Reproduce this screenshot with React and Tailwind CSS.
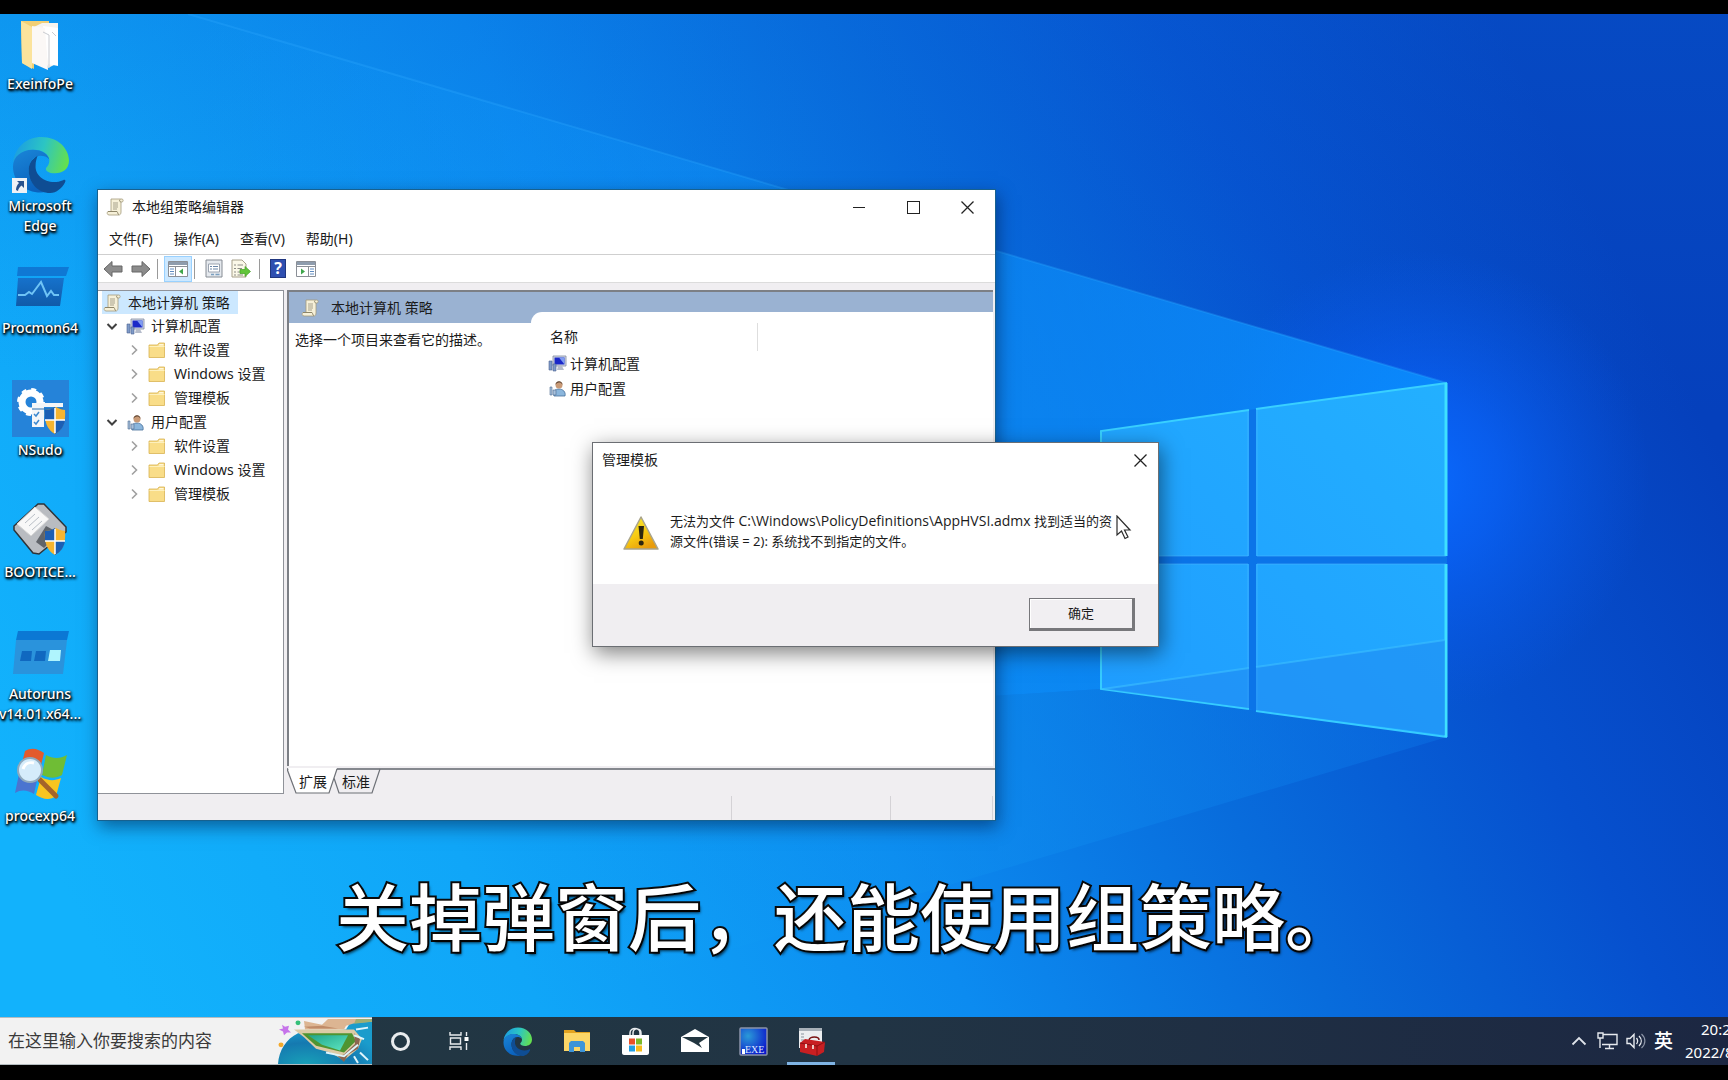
import React, { useState } from "react";

const Wallpaper = () => (
    <svg className="absolute inset-0 w-full h-full" viewBox="0 14 1728 1003" preserveAspectRatio="none" aria-hidden="true">
        <defs>
            <linearGradient id="sky" x1="0" y1="0.75" x2="1" y2="0.45">
                <stop offset="0" stopColor="#12b2fc" />
                <stop offset="0.22" stopColor="#10a6f8" />
                <stop offset="0.45" stopColor="#0c8bf0" />
                <stop offset="0.64" stopColor="#086cdc" />
                <stop offset="0.82" stopColor="#0650ce" />
                <stop offset="1" stopColor="#0540bc" />
            </linearGradient>
            <radialGradient id="glow" gradientUnits="userSpaceOnUse" cx="1420" cy="480" r="230">
                <stop offset="0" stopColor="#0a6bff" stopOpacity="0.95" />
                <stop offset="0.35" stopColor="#0a66ff" stopOpacity="0.65" />
                <stop offset="1" stopColor="#0a5cf0" stopOpacity="0" />
            </radialGradient>
            <linearGradient id="beam" gradientUnits="userSpaceOnUse" x1="200" y1="0" x2="1447" y2="0">
                <stop offset="0" stopColor="#12a4ff" stopOpacity="0" />
                <stop offset="0.5" stopColor="#0f98ff" stopOpacity="0.4" />
                <stop offset="1" stopColor="#0a90ff" stopOpacity="0.85" />
            </linearGradient>
            <linearGradient id="lowBeam" gradientUnits="userSpaceOnUse" x1="500" y1="0" x2="1447" y2="0">
                <stop offset="0" stopColor="#10a8f8" stopOpacity="0" />
                <stop offset="0.55" stopColor="#0e8cee" stopOpacity="0.5" />
                <stop offset="1" stopColor="#0b70e4" stopOpacity="0.5" />
            </linearGradient>
            <linearGradient id="pane" x1="0" y1="1" x2="1" y2="0">
                <stop offset="0" stopColor="#1f9cff" />
                <stop offset="1" stopColor="#23b0ff" />
            </linearGradient>
            <linearGradient id="topShade" x1="0" y1="0" x2="0" y2="1">
                <stop offset="0" stopColor="#0866d8" stopOpacity="0.25" />
                <stop offset="0.4" stopColor="#0866d8" stopOpacity="0" />
            </linearGradient>
        </defs>
        <rect y="14" width="1728" height="1003" fill="url(#sky)" />
        <rect y="14" width="1728" height="1003" fill="url(#topShade)" />
        <rect x="1180" y="240" width="480" height="480" fill="url(#glow)" />
        <path d="M0 14H188L1447 383V737L1101 689 900 702 0 745Z" fill="url(#beam)" />
        <path d="M0 745 900 702 1101 689 1447 737 1000 870 500 1017H0Z" fill="url(#lowBeam)" />
        <path d="M188 14 1447 383" stroke="#2fa8ff" strokeWidth="2" strokeOpacity="0.3" />
        <path d="M1249 410 1256 409V711L1249 709ZM1101 556H1447V564H1101Z" fill="#0b74e8" />
        <path d="M1101 431 1249 410V556H1101ZM1256 409 1447 383V556H1256ZM1101 564H1249V709L1101 689ZM1256 564H1447V737L1256 711Z" fill="url(#pane)" />
        <path d="M1101 556V431L1249 410M1256 409 1447 383" fill="none" stroke="#39d0ff" strokeWidth="2" />
        <path d="M1101 564V689L1249 709M1256 711 1447 737" fill="none" stroke="#36ccff" strokeWidth="2" />
        <path d="M1446 383V556M1446 564V737" stroke="#3fe0ff" strokeWidth="3" />
        <path d="M1248 411V556H1101M1257 410V556H1446M1101 564H1248V708M1446 564H1257V710" fill="none" stroke="#4bb8ff" strokeOpacity="0.6" strokeWidth="1" />
        <path d="M1103 689 1249 668V708ZM1256 667 1445 640V735L1256 710Z" fill="#2087f2" fillOpacity="0.5" />
        <path d="M1103 689 1249 668M1256 667 1445 640" stroke="#3cc0ff" strokeWidth="2" strokeOpacity="0.6" />
    </svg>
);

const Shield = () => (
    <g>
        <path d="M44 30c4 0 8-1 11-3 3 2 7 3 9 3 1 11-2 20-10 24-8-4-11-13-10-24Z" fill="#f7b531" />
        <path d="M54 27c-3 2-6 3-10 3v10h10ZM64 40H54v14c6-3 9-8 10-14Z" fill="#1c5fb4" />
        <path d="M44 40h20M54 28v25" stroke="#fff" strokeWidth="1.5" />
    </g>
);

const EdgeLogo = ({ className }) => (
    <svg className={className} viewBox="0 0 58 58" aria-hidden="true">
        <defs>
            <linearGradient id="edgeTop" x1="0" y1="0.4" x2="1" y2="0.6">
                <stop offset="0" stopColor="#1b9de2" />
                <stop offset="0.5" stopColor="#2cc5c3" />
                <stop offset="1" stopColor="#66e04c" />
            </linearGradient>
            <linearGradient id="edgeLeft" x1="0" y1="0" x2="0.4" y2="1">
                <stop offset="0" stopColor="#1a86d8" />
                <stop offset="1" stopColor="#0b62bd" />
            </linearGradient>
        </defs>
        <path d="M1 27C3 11 15 1 30 1c17 0 28 12 28 24 0 9-7 13-14 13-7 0-11-3-9-6 2-2 3-4 3-7 0-6-7-11-16-11C12 14 4 20 1 27Z" fill="url(#edgeTop)" />
        <path d="M1 31c0-10 9-17 20-17 10 0 16 5 17 10-2-3-6-4-9-4-7 0-12 6-12 15 0 10 7 19 18 22C16 60 1 48 1 31Z" fill="url(#edgeLeft)" />
        <path d="M26 20c-7 4-9 9-9 15 0 12 9 23 22 23 6 0 12-5 15-11 1-2 0-3-2-2-14 6-29-3-28-15 0-4 1-7 2-10Z" fill="#0f4d93" />
    </svg>
);

const FolderOpenIcon = () => (
    <svg className="w-[57px] h-[57px]" viewBox="0 0 57 57" aria-hidden="true">
        <path d="M9 7h28v8H22v40L10 49Z" fill="#f2cf74" />
        <path d="M9 7 20 13v42L10 49Z" fill="#fbe39c" />
        <path d="M22 13 30 9h16v40l-10 5Z" fill="#f7f4ef" />
        <path d="M31 12l15 2v38l-10-2Z" fill="#fff" />
        <path d="M20 12 33 14l3 42-16-7Z" fill="#fbf8f6" />
        <path d="M31 18l6 3v33M40 18l4 4" fill="none" stroke="#c9cbd0" />
    </svg>
);

const EdgeDesktopIcon = () => (
    <div className="relative">
        <EdgeLogo className="w-[57px] h-[57px]" />
        <svg className="absolute left-0 bottom-0 w-[15px] h-[15px]" viewBox="0 0 15 15" aria-hidden="true">
            <path d="M0 0h15v15H0Z" fill="#eef1f5" />
            <path d="M5 3h7v7L9.500 7.500C7.500 9 6.500 10.500 6 13L4 12c0-3 1-5 3-7Z" fill="#28508c" />
        </svg>
    </div>
);

const ProcmonIcon = () => (
    <svg className="w-[57px] h-[57px]" viewBox="0 0 57 57" aria-hidden="true">
        <defs>
            <linearGradient id="procmon" x1="0" y1="0" x2="0" y2="1">
                <stop offset="0" stopColor="#1672cc" />
                <stop offset="1" stopColor="#105aa8" />
            </linearGradient>
        </defs>
        <path d="M6 9h51l-3 9H5Z" fill="#0f78d4" />
        <path d="M6 20h46l-4 28H4Z" fill="url(#procmon)" />
        <path d="M6 37h7l4-3 3 2 9-12 6 14 4-5 3 4h5" fill="none" stroke="#6fc4f5" strokeWidth="2" />
    </svg>
);

const NSudoIcon = () => (
    <svg className="w-[57px] h-[57px]" viewBox="0 0 57 57" aria-hidden="true">
        <path d="M0 0h57v57H0Z" fill="#2583d9" />
        <circle cx="19" cy="22" r="9" fill="none" stroke="#fff" strokeWidth="7" />
        <circle cx="19" cy="22" r="12" fill="none" stroke="#fff" strokeWidth="4" strokeDasharray="4.700 4.700" />
        <path d="M20 23h31v4H20ZM20 27h12v20H20Z" fill="#f4f6f8" />
        <path d="M20 29h31" stroke="#2b6fae" />
        <path d="m22 34 2 2 3-4M22 42l2 2 3-4" fill="none" stroke="#3c88cf" strokeWidth="1.500" />
        <g transform="translate(-11 0)"><Shield /></g>
    </svg>
);

const BooticeIcon = () => (
    <svg className="w-[57px] h-[57px]" viewBox="0 0 57 57" aria-hidden="true">
        <path d="M26 2h6l22 23v5L27 52l-6-1L2 28v-4Z" fill="#b9bcc1" stroke="#2e3338" strokeWidth="1.500" />
        <path d="M23 5 37 17 19 34 5 22Z" fill="#f8f8f8" stroke="#d5d5d5" />
        <path d="M13 21l10-9M17 24l10-9M20 28l10-9" stroke="#b9bfc6" />
        <path d="M34 24 47 31 32 46 24 40Z" fill="#60646a" />
        <g transform="translate(-11 -1)"><Shield /></g>
    </svg>
);

const AutorunsIcon = () => (
    <svg className="w-[57px] h-[57px]" viewBox="0 0 57 57" aria-hidden="true">
        <path d="M6 7h51l-2 9H4Z" fill="#0b78d4" />
        <path d="M4 16h51l-4 34H1Z" fill="#2a93dc" />
        <path d="M10 27h10l-1 10H8ZM24 27h10l-1 10H22Z" fill="#1068c0" />
        <path d="M38 26h11l-1 11H36Z" fill="#aff4fd" />
    </svg>
);

const ProcexpIcon = () => (
    <svg className="w-[57px] h-[57px]" viewBox="0 0 57 57" aria-hidden="true">
        <path d="M13 5c7-4 13-2 19 2l-5 20c-6-4-12-5-19-2Z" fill="#e35a2c" />
        <path d="M34 9c7 4 14 4 21 0l-5 20c-7 4-13 3-20 0Z" fill="#6fbd35" />
        <path d="M7 28c7-3 13-2 19 2l-4 18c-6-4-13-5-19-1Z" fill="#4b74d0" />
        <path d="M29 31c7 4 14 4 20 1l-5 18c-6 5-14 3-20-1Z" fill="#f8c51f" />
        <path d="M28 34 44 50" stroke="#a4642a" strokeWidth="5" strokeLinecap="round" />
        <circle cx="18" cy="24" r="12" fill="#d5ecfb" stroke="#8fa9bd" strokeWidth="2" />
        <path d="M11 23c2-6 7-7 11-6" fill="none" stroke="#fff" strokeWidth="3" />
    </svg>
);

const desktopIcons = [
    { id: 1, label: "ExeinfoPe", Icon: FolderOpenIcon },
    { id: 2, label: "Microsoft Edge", Icon: EdgeDesktopIcon },
    { id: 3, label: "Procmon64", Icon: ProcmonIcon },
    { id: 4, label: "NSudo", Icon: NSudoIcon },
    { id: 5, label: "BOOTICE...", Icon: BooticeIcon },
    { id: 6, label: "Autoruns v14.01.x64...", Icon: AutorunsIcon },
    { id: 7, label: "procexp64", Icon: ProcexpIcon },
];

const ScrollIcon = () => (
    <svg className="w-[18px] h-[18px] shrink-0" viewBox="0 0 18 18" aria-hidden="true">
        <path d="M5 1h11c1.500 0 1.500 3 0 3h-1v10c0 2-1 3-2 3H3c-2 0-2.500-3-1-3.500h3Z" fill="#f6f0d8" stroke="#a39a7c" strokeWidth="0.800" />
        <path d="M14 1.500c-1 1 0 2.500 1 2.500M2 13.500h9c1 1 .5 3 2 3" fill="none" stroke="#8d8568" />
        <path d="M7 5h5M7 7h5M7 9h5M7 11h4" stroke="#a6a18c" />
    </svg>
);

const ComputerIcon = () => (
    <svg className="w-[19px] h-[17px] shrink-0" viewBox="0 0 19 17" aria-hidden="true">
        <path d="M5 1h13v10H5Z" fill="#d8dce6" stroke="#7e88a0" strokeWidth="0.800" />
        <path d="M6.500 2.500h10v7h-10Z" fill="#1a28c8" />
        <path d="M11 2.500h5.500v7Z" fill="#7f9cf0" />
        <path d="M10 11h4l2 4H9Z" fill="#b5bccb" />
        <path d="M1 6h3v9H1ZM5 9h3v7H5Z" fill="#7f9bc8" stroke="#4a6291" strokeWidth="0.600" />
    </svg>
);

const UserIcon = () => (
    <svg className="w-[17px] h-[17px] shrink-0" viewBox="0 0 17 17" aria-hidden="true">
        <path d="M5 16c-1-5 1-7 5-7s7 3 6 7Z" fill="#8bb6dc" stroke="#46709b" strokeWidth="0.800" />
        <circle cx="10" cy="5" r="3.500" fill="#c99a76" />
        <path d="M6.500 5c0-5 7-5 7 0-1-2-2-2.500-3.500-2.500S7 3.500 6.500 5Z" fill="#5f4634" />
        <path d="M1 7h2v8H1ZM4 10h3v5H4Z" fill="#a8c1dc" stroke="#4d6c90" strokeWidth="0.600" />
    </svg>
);

const FolderIcon = () => (
    <svg className="w-[18px] h-[17px] shrink-0" viewBox="0 0 18 17" aria-hidden="true">
        <path d="M1 3h8.500l1.500-2h5.500v14.500H1Z" fill="#f9dd88" stroke="#d8b352" strokeWidth="0.800" />
        <path d="M11.500 2h4v1.500h-5Z" fill="#fff7dc" />
        <path d="M1.500 4.500h15" stroke="#fdf0bd" />
    </svg>
);

const Chevron = ({ open }) => (
    <svg className="w-3 h-3 shrink-0" viewBox="0 0 12 12" aria-hidden="true">
        {open ? (
            <path d="M1.500 4 6 8.500 10.500 4" fill="none" stroke="#404040" strokeWidth="2" />
        ) : (
            <path d="M4 1.500 8.500 6 4 10.500" fill="none" stroke="#a0a0a0" strokeWidth="1.600" />
        )}
    </svg>
);

const CloseGlyph = () => (
    <svg className="w-[13px] h-[13px]" viewBox="0 0 13 13" aria-hidden="true">
        <path d="M.5.5 12.500 12.500M12.500.5.5 12.500" stroke="#222" strokeWidth="1.300" />
    </svg>
);

const tree = [
    { name: "计算机配置", Icon: ComputerIcon, children: ["软件设置", "Windows 设置", "管理模板"] },
    { name: "用户配置", Icon: UserIcon, children: ["软件设置", "Windows 设置", "管理模板"] },
];

const menus = ["文件(F)", "操作(A)", "查看(V)", "帮助(H)"];

const Separator = () => <span className="w-px h-5 bg-[#9a9a9a]" />;

const ArrowIcon = ({ flip }) => (
    <svg className={flip ? "w-5 h-[18px] rotate-180" : "w-5 h-[18px]"} viewBox="0 0 20 18" aria-hidden="true">
        <path d="M1 9 9 1.500V6h10v6H9v4.500Z" fill="#8c8c8c" stroke="#666" />
    </svg>
);

const PanelIcon = ({ flip }) => (
    <svg className="w-5 h-4" viewBox="0 0 20 16" aria-hidden="true">
        <path d="M.5.5h19v15H.5Z" fill="#fff" stroke="#8b8f96" />
        <path d="M1 1h18v3H1Z" fill="#8e9cad" />
        <path d="M1 5.500h18" stroke="#8b8f96" />
        {flip ? (
            <>
                <path d="M12.500 6v9" stroke="#8b8f96" />
                <path d="M14 8h4M14 10.500h4M14 13h4" stroke="#5f8bc0" />
                <path d="M5 7.500v6l4-3Z" fill="#3fa64b" />
            </>
        ) : (
            <>
                <path d="M7.500 6v9" stroke="#8b8f96" />
                <path d="M2 8h4M2 10.500h4M2 13h4" stroke="#5f8bc0" />
                <path d="M15 7.500v6l-4-3Z" fill="#3fa64b" />
            </>
        )}
    </svg>
);

const PropsIcon = () => (
    <svg className="w-[18px] h-[19px]" viewBox="0 0 18 19" aria-hidden="true">
        <path d="M1 3V1h16v17H1Z" fill="#e5e9ee" stroke="#868c94" />
        <path d="M3.500 5h11v8h-11Z" fill="#fff" stroke="#9aa3b0" />
        <path d="M5 7.500h2M8 7.500h5M5 10h2M8 10h5" stroke="#6a86a8" />
        <path d="M6 15.500h3M10.500 15.500h4" stroke="#7ba0c0" strokeWidth="1.500" />
    </svg>
);

const ExportIcon = () => (
    <svg className="w-5 h-[19px]" viewBox="0 0 20 19" aria-hidden="true">
        <path d="M1 1h10l4 4v13H1Z" fill="#fbf8e8" stroke="#a7a08a" />
        <path d="M3 6h2M6.500 6H12M3 9.500h2M6.500 9.500H11M3 13h2M6.500 13H10M3 16h2M6.500 16H12" stroke="#8d8c86" />
        <path d="M9 10.500h5V7.500l5.500 5-5.500 5v-3H9Z" fill="#62c53a" stroke="#419d22" strokeWidth="0.700" />
    </svg>
);

const HelpIcon = () => (
    <span className="w-4 h-[19px] bg-[#2f4fb0] border border-[#20367f] text-white text-base leading-4 font-bold text-center">?</span>
);

const PolicyWindow = () => {
    const [selected, setSelected] = useState("root");

    return (
        <section className="absolute left-[97px] top-[175px] w-[899px] flex flex-col bg-white border border-[#17618f] shadow-[2px_6px_16px_rgba(0,20,60,0.5)]">
            <header className="flex items-center h-[34px] pl-2 pr-px">
                <ScrollIcon />
                <h1 className="ml-2 text-sm">本地组策略编辑器</h1>
                <div className="ml-auto flex h-full">
                    <button type="button" aria-label="最小化" className="w-[54px] flex items-center justify-center">
                        <span className="w-3 h-px bg-[#222]" />
                    </button>
                    <button type="button" aria-label="最大化" className="w-[54px] flex items-center justify-center">
                        <span className="w-[13px] h-[13px] border border-[#222]" />
                    </button>
                    <button type="button" aria-label="关闭" className="w-[54px] flex items-center justify-center">
                        <CloseGlyph />
                    </button>
                </div>
            </header>

            <nav className="flex gap-[21px] h-[31px] items-center pl-[11px] border-b border-[#cfcfcf]">
                {menus.map((item) => (
                    <button key={item} type="button" className="text-sm">{item}</button>
                ))}
            </nav>

            <div className="flex items-center h-7 pl-[5px] border-b border-[#dcdcdc]">
                <button type="button" aria-label="后退"><ArrowIcon /></button>
                <button type="button" aria-label="前进" className="ml-2 mr-1.5"><ArrowIcon flip /></button>
                <Separator />
                <button type="button" aria-label="显示控制台树" className="ml-1.5 mr-0.5 w-7 h-[26px] flex items-center justify-center bg-[#cce8ff] border border-[#99d1ff]">
                    <PanelIcon />
                </button>
                <Separator />
                <button type="button" aria-label="属性" className="ml-2.5 mr-2"><PropsIcon /></button>
                <button type="button" aria-label="导出列表" className="mr-2"><ExportIcon /></button>
                <Separator />
                <button type="button" aria-label="帮助" className="ml-2.5 mr-2.5 flex"><HelpIcon /></button>
                <button type="button" aria-label="操作窗格"><PanelIcon flip /></button>
            </div>

            <div className="flex pt-[7px] bg-[#f0eef1]">
                <aside className="w-[186px] h-[504px] shrink-0 bg-white border-t border-r border-b border-[#8f9299]">
                    <ul className="pl-1 text-sm leading-6">
                        <li>
                            <button
                                type="button"
                                onClick={() => setSelected("root")}
                                className={selected === "root" ? "flex items-center h-[23px] pl-px pr-2 gap-[7px] bg-[#cce8ff]" : "flex items-center h-[23px] pl-px pr-2 gap-[7px]"}
                            >
                                <ScrollIcon />
                                <span>本地计算机 策略</span>
                            </button>
                            <ul className="pl-1">
                                {tree.map(({ name, Icon, children }) => (
                                    <li key={name}>
                                        <button type="button" className="flex items-center h-6">
                                            <Chevron open />
                                            <span className="ml-2 w-[19px] flex justify-center"><Icon /></span>
                                            <span className="ml-1.5">{name}</span>
                                        </button>
                                        <ul className="pl-[22px]">
                                            {children.map((child) => (
                                                <li key={child}>
                                                    <button type="button" className="flex items-center h-6 whitespace-nowrap">
                                                        <Chevron />
                                                        <span className="ml-2"><FolderIcon /></span>
                                                        <span className="ml-2">{child}</span>
                                                    </button>
                                                </li>
                                            ))}
                                        </ul>
                                    </li>
                                ))}
                            </ul>
                        </li>
                    </ul>
                </aside>

                <div className="ml-[3px] flex-1 flex flex-col">
                    <div className="flex-1 flex flex-col mr-0.5 bg-white border-t-2 border-l-2 border-[#7c7f85]">
                        <div className="flex bg-[#9ab2d2]">
                            <h2 className="flex items-center h-[31px] w-[242px] pl-3 text-sm">
                                <ScrollIcon />
                                <span className="ml-3">本地计算机 策略</span>
                            </h2>
                            <div className="flex-1 mt-[20px] bg-white rounded-tl-xl" />
                        </div>
                        <div className="flex text-sm">
                            <p className="w-[250px] pl-1.5 pt-[7px]">选择一个项目来查看它的描述。</p>
                            <div className="flex-1">
                                <div className="flex items-center h-[28px] w-[219px] pl-[11px] border-r border-[#dedede]">名称</div>
                                <ul className="pl-[9px]">
                                    <li className="flex items-center h-[25px] gap-[3px]"><ComputerIcon />计算机配置</li>
                                    <li className="flex items-center h-[25px] gap-[3px]"><span className="w-[19px] flex justify-center"><UserIcon /></span>用户配置</li>
                                </ul>
                            </div>
                        </div>
                    </div>
                    <div className="relative flex h-[26px] mt-0.5 border-t-2 border-[#85888e] text-sm">
                        <svg className="absolute -top-0.5 left-0 w-[94px] h-[26px]" viewBox="0 0 94 26" aria-hidden="true">
                            <path d="M1 0 9 25H42L50 0Z" fill="#fff" />
                            <path d="M0 1 9 25H42L50 1M47 10 52 25H85L93 1" fill="none" stroke="#6d7076" strokeWidth="1.200" />
                        </svg>
                        <button type="button" className="relative pl-3">扩展</button>
                        <button type="button" className="relative ml-[15px]">标准</button>
                    </div>
                </div>
            </div>

            <footer className="flex h-[26px] pt-0.5 bg-[#f0eef1]">
                <span className="flex-1 border-r border-[#d4d2d6]" />
                <span className="w-[159px] border-r border-[#d4d2d6]" />
                <span className="w-[102px] mr-0.5 border-r border-[#d4d2d6]" />
            </footer>
        </section>
    );
};

const WarningIcon = () => (
    <svg className="w-9 h-9 shrink-0" viewBox="0 0 36 36" aria-hidden="true">
        <defs>
            <linearGradient id="warn" x1="0" y1="0" x2="0.6" y2="1">
                <stop offset="0" stopColor="#f7ef3a" />
                <stop offset="0.6" stopColor="#f7c912" />
                <stop offset="1" stopColor="#e89c0c" />
            </linearGradient>
        </defs>
        <path d="M18 2 35 34H1Z" fill="url(#warn)" stroke="#a9a48c" strokeWidth="1.500" strokeLinejoin="round" />
        <path d="M15.500 11h5.500L19.800 24h-3Z" fill="#2c2610" />
        <circle cx="18.200" cy="28" r="2.500" fill="#2c2610" />
    </svg>
);

const ErrorDialog = () => (
    <section role="alertdialog" aria-labelledby="dialog-title" className="absolute left-[592px] top-[428px] w-[567px] bg-white border border-[#6b6e73] shadow-[2px_6px_20px_rgba(0,0,0,0.5)]">
        <header className="flex items-center h-[34px] pl-[9px]">
            <h2 id="dialog-title" className="text-sm">管理模板</h2>
            <button type="button" aria-label="关闭" className="ml-auto w-9 h-full flex items-center justify-center">
                <CloseGlyph />
            </button>
        </header>
        <div className="flex gap-[11px] pt-[34px] pl-[30px] h-[107px]">
            <div className="pt-1"><WarningIcon /></div>
            <p className="text-[13px] leading-5 whitespace-nowrap">
                无法为文件 <span className="font-['Open_Sans',sans-serif] text-sm leading-5">C:\Windows\PolicyDefinitions\AppHVSI.admx</span> 找到适当的资<br />
                源文件(错误 = 2): 系统找不到指定的文件。
            </p>
        </div>
        <footer className="flex justify-end h-[62px] pt-[14px] pr-[23px] bg-[#f0eef1]">
            <button type="button" className="w-[106px] h-[33px] text-[13px] bg-[#f1eff2] border border-r-[3px] border-b-[3px] border-[#77777b] shadow-[inset_1px_1px_0_#fff]">确定</button>
        </footer>
        <svg className="absolute left-[523px] top-[72px] w-4 h-[25px]" viewBox="0 0 16 25" aria-hidden="true">
            <path d="M1 1v19l4.500-4 3.500 7.500 3-1.500-3.500-7H14Z" fill="#fff" stroke="#2b2b2b" strokeWidth="1.200" />
        </svg>
    </section>
);

const SearchArt = () => (
    <svg className="h-full w-[94px] shrink-0" viewBox="0 0 94 48" preserveAspectRatio="none" aria-hidden="true">
        <defs>
            <radialGradient id="sea" cx="0.3" cy="1" r="0.8">
                <stop offset="0" stopColor="#18a0b8" />
                <stop offset="0.6" stopColor="#1579b0" />
                <stop offset="1" stopColor="#1a9ccc" />
            </radialGradient>
            <linearGradient id="lagoon" x1="0" y1="0" x2="1" y2="1">
                <stop offset="0" stopColor="#1fa58c" />
                <stop offset="1" stopColor="#5fe6c0" />
            </linearGradient>
        </defs>
        <path d="M0 48C1 34 8 22 20 16L68 12 74 2H94V48Z" fill="url(#sea)" />
        <path d="M26 3 44 7 50 1H94V4L78 5 68 8 66 12H27Z" fill="#dcb592" />
        <path d="M78 1H94V4L76 6Z" fill="#9fae72" />
        <path d="M26 9 44 8 60 11H32Z" fill="#c08b68" />
        <path d="M16 12H76L84 22 80 32 66 44 52 36 38 32 26 20Z" fill="#dccba6" />
        <path d="M24 16H74L78 24 66 36 38 29Z" fill="#4f9430" />
        <path d="M30 18H70L62 34 44 28Z" fill="url(#lagoon)" />
        <path d="M60 40 66 46 70 38 80 32 82 22 76 16 77 27 66 38Z" fill="#8b6650" />
        <path d="M48 36 66 40 80 28M78 12l12-2M82 36l8 8M76 40l4 7M76 18l10 4" fill="none" stroke="#dff5fb" strokeWidth="2" />
        <path d="M4 7 7 9 11 8 10 12 13 15 9 15 6 18 5 14 1 12 5 11Z" fill="#c673ea" />
        <circle cx="20" cy="5" r="2.500" fill="#35c079" />
        <circle cx="3" cy="28" r="2.500" fill="#f4a92a" />
    </svg>
);

const TaskViewIcon = () => (
    <svg className="w-5 h-5" viewBox="0 0 20 20" aria-hidden="true">
        <path d="M1 1v3h11V1M1 19v-3h11v3M1.500 7h10v6h-10Z" fill="none" stroke="#e8ebee" strokeWidth="1.400" />
        <path d="M17.500 1v4M17.500 12v7" stroke="#e8ebee" strokeWidth="1.400" />
        <path d="M15.500 6h4v4h-4Z" fill="#fff" />
    </svg>
);

const ExplorerIcon = () => (
    <svg className="w-7 h-6" viewBox="0 0 28 24" aria-hidden="true">
        <path d="M1 1h10l2 2h14v6H1Z" fill="#e3a320" />
        <path d="M1 4h26v18H1Z" fill="#fcd667" />
        <path d="M6 23v-9l2-2h12l2 2v9h-5v-5h-6v5Z" fill="#3d94d8" />
    </svg>
);

const StoreIcon = () => (
    <svg className="w-[29px] h-[29px]" viewBox="0 0 29 29" aria-hidden="true">
        <path d="M9 8V6c0-6 10-6 10 0v2M12 8V6c0-6 8-5 8 0v2" fill="none" stroke="#e8ebee" strokeWidth="1.500" />
        <path d="M1 8h27v18c0 1-1 2-2 2H3c-1 0-2-1-2-2Z" fill="#fff" />
        <path d="M8 11.500h6v6H8Z" fill="#e8502a" />
        <path d="M15 11.500h6v6h-6Z" fill="#7cb928" />
        <path d="M8 18.500h6v6H8Z" fill="#1f9fe4" />
        <path d="M15 18.500h6v6h-6Z" fill="#f6bb1c" />
    </svg>
);

const MailIcon = () => (
    <svg className="w-[30px] h-6" viewBox="0 0 30 24" aria-hidden="true">
        <path d="M1 8 15 0l14 8v15H1Z" fill="#fff" />
        <path d="M2 8h26l-9 6 3 5-8-5Z" fill="#233640" />
    </svg>
);

const ExeIcon = () => (
    <svg className="w-[29px] h-[29px]" viewBox="0 0 29 29" aria-hidden="true">
        <defs>
            <radialGradient id="exe" cx="0.3" cy="0.3" r="0.8">
                <stop offset="0" stopColor="#2a9ad8" />
                <stop offset="1" stopColor="#0b18cc" />
            </radialGradient>
        </defs>
        <rect x="1" y="1" width="27" height="27" rx="1" fill="url(#exe)" stroke="#8a93a8" strokeWidth="1.500" />
        <path d="M3 22h3v5H3Z" fill="#fff" />
        <text x="6" y="26" fontSize="10" fontFamily="Liberation Serif, serif" fill="#dfe6ff">EXE</text>
    </svg>
);

const ToolboxIcon = () => (
    <svg className="w-[29px] h-[29px]" viewBox="0 0 29 29" aria-hidden="true">
        <path d="M2 1h23v20H2Z" fill="#eceef0" />
        <path d="M2 1h23v3H2Z" fill="#a8b0b8" />
        <path d="M4 7h3M4 10h3M4 13h3" stroke="#8a949e" />
        <path d="M12 13c1-4 10-4 10 0" fill="none" stroke="#7a1414" strokeWidth="1.500" />
        <path d="M3 16 8 12 28 15 27 25 20 29 3 25Z" fill="#c81f22" />
        <path d="M3 16 20 19 28 15 M20 19v10" fill="none" stroke="#8d1013" />
        <path d="M8 17h2v4H8ZM15 18h2v4h-2Z" fill="#eec7c0" />
    </svg>
);

const taskbarApps = [
    { id: 1, name: "任务视图", icon: <TaskViewIcon /> },
    { id: 2, name: "Microsoft Edge", icon: <EdgeLogo className="w-[29px] h-[29px]" /> },
    { id: 3, name: "文件资源管理器", icon: <ExplorerIcon /> },
    { id: 4, name: "Microsoft Store", icon: <StoreIcon /> },
    { id: 5, name: "邮件", icon: <MailIcon /> },
    { id: 6, name: "ExeinfoPe", icon: <ExeIcon /> },
    { id: 7, name: "管理控制台", icon: <ToolboxIcon />, active: true },
];

const Taskbar = () => (
    <footer className="relative h-12 flex shrink-0 overflow-hidden bg-linear-to-r from-[#223842] via-[#213444] to-[#1c2742] text-white">
        <div className="flex w-[372px] shrink-0 bg-[#f2f2f2] border-y border-[#b4bcc0]">
            <input
                type="text"
                aria-label="搜索"
                placeholder="在这里输入你要搜索的内容"
                className="flex-1 min-w-0 pl-2 text-[17px] text-black placeholder:text-[#3a3a3a] outline-none"
            />
            <SearchArt />
        </div>
        <button type="button" aria-label="Cortana" className="w-[57px] flex items-center justify-center">
            <span className="w-[19px] h-[19px] rounded-full border-[3px] border-[#e9ecee]" />
        </button>
        {taskbarApps.map((app) => (
            <button
                key={app.id}
                type="button"
                aria-label={app.name}
                className={app.active ? "relative w-14 flex items-center justify-center" : "w-[59px] flex items-center justify-center"}
            >
                {app.icon}
                {app.active && <span className="absolute bottom-0 inset-x-1 h-[3px] bg-[#7fb4e4]" />}
            </button>
        ))}
        <div className="ml-auto flex items-center">
            <svg className="w-4 h-[10px]" viewBox="0 0 16 10" aria-hidden="true">
                <path d="M1.500 8.500 8 2l6.500 6.500" fill="none" stroke="#dfe3ea" strokeWidth="1.800" />
            </svg>
            <svg className="ml-2.5 w-[21px] h-[18px]" viewBox="0 0 21 18" aria-hidden="true">
                <path d="M6 2.500h14v10H5M12.500 12.500v4M8 16.500h9M1 1h5v5H1ZM3 6v10" fill="none" stroke="#e6e9ee" strokeWidth="1.400" />
            </svg>
            <svg className="ml-2 w-5 h-[18px]" viewBox="0 0 20 18" aria-hidden="true">
                <path d="M1 6.500h3l4-4v13l-4-4H1Z" fill="none" stroke="#e6e9ee" strokeWidth="1.400" />
                <path d="M10.500 6c1.500 2 1.500 4 0 6M13 4c3 3 3 7 0 10" fill="none" stroke="#e6e9ee" strokeWidth="1.300" />
                <path d="M15.500 2c4.500 4 4.500 10 0 14" fill="none" stroke="#8d95a6" strokeWidth="1.200" />
            </svg>
            <span className="ml-2 text-[19px] font-medium">英</span>
            <time className="ml-3 w-[43px] text-[15px] leading-[23px] whitespace-nowrap overflow-hidden">
                <span className="block pl-4">20:2</span>
                <span className="block">2022/8</span>
            </time>
        </div>
    </footer>
);

const App = () => {
    return (
        <div className="h-screen flex flex-col bg-black text-[#1b1b1b] font-['Noto_Sans','Noto_Sans_CJK_SC',sans-serif] overflow-hidden">
            <main className="relative flex-1 mt-[14px] overflow-hidden">
                <Wallpaper />

                <ul className="relative w-20">
                    {desktopIcons.map(({ id, label, Icon }) => (
                        <li key={id} className="h-[122px]">
                            <button type="button" className="w-full flex flex-col items-center gap-[3px]">
                                <Icon />
                                <span className="text-sm leading-5 font-medium text-white [text-shadow:0_1px_2px_#000,1px_1px_3px_#000,1px_2px_3px_#000]">{label}</span>
                            </button>
                        </li>
                    ))}
                </ul>

                <PolicyWindow />
                <ErrorDialog />

                <p className="absolute left-[336px] bottom-[52px] text-[73px] leading-[96px] font-medium text-white whitespace-nowrap [-webkit-text-stroke:4px_#0a0a0a] [paint-order:stroke_fill] [text-shadow:2px_3px_3px_rgba(0,0,0,0.7)]">
                    关掉弹窗后，还能使用组策略。
                </p>
            </main>

            <Taskbar />
            <div className="h-[15px] shrink-0 bg-black" />
        </div>
    );
};

export default App;
